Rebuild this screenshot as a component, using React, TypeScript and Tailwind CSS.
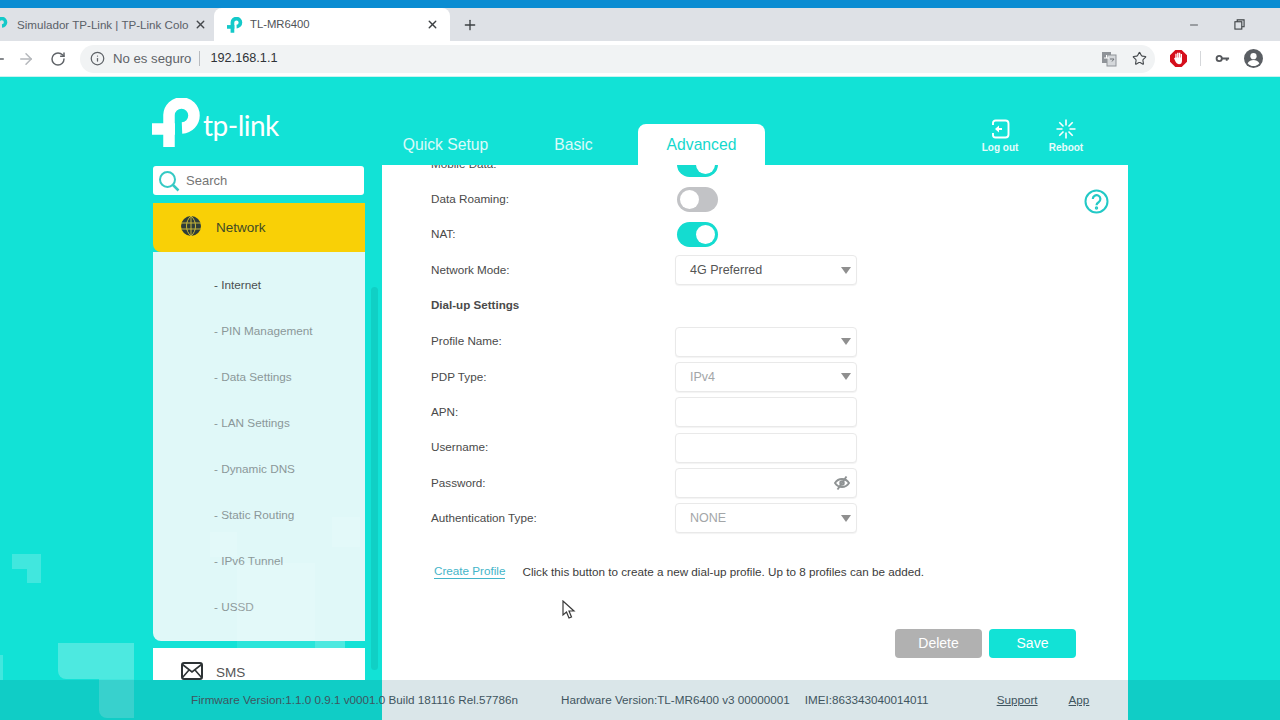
import { ArrowLeft, ArrowRight, Info, Minus, Plus, RotateCw, Star, X } from "lucide-react";

const subItems = ["- Internet", "- PIN Management", "- Data Settings", "- LAN Settings", "- Dynamic DNS", "- Static Routing", "- IPv6 Tunnel", "- USSD"];

function TpMark({ className, color }: { className: string; color: string }) {
  return (
    <svg viewBox="0 0 50 50" className={className} fill="none">
      <path d="M17 49V17A12.500 12.500 0 1 1 30 30" stroke={color} strokeWidth="11.500" />
      <path d="M0 31H23" stroke={color} strokeWidth="11.500" />
    </svg>
  );
}

function Toggle({ on }: { on: boolean }) {
  return (
    <div className={`ml-[2px] w-[41px] h-[25px] rounded-full p-[3px] flex ${on ? "bg-[#14dcd0] justify-end" : "bg-[#c2c3c6] justify-start"}`}>
      <div className="w-[19px] h-[19px] rounded-full bg-white" />
    </div>
  );
}

function Box({ text, arrow, muted, children }: { text?: string; arrow?: boolean; muted?: boolean; children?: React.ReactNode }) {
  return (
    <div className="w-[182px] h-[30px] rounded border border-[#e9e9e9] shadow-[0_1px_1px_rgba(0,0,0,0.05)] bg-white flex items-center pl-[14px] pr-[5px]">
      <span className={`flex-1 mt-px text-[12.500px] ${muted ? "text-[#a3a6a8]" : "text-[#555555]"}`}>{text}</span>
      {arrow && <div className="w-0 h-0 border-l-[5.500px] border-r-[5.500px] border-t-[7px] border-l-transparent border-r-transparent border-t-[#8f8f8f]" />}
      {children}
    </div>
  );
}

function Row({ label, children, className }: { label: string; children?: React.ReactNode; className?: string }) {
  return (
    <div className={`flex items-center h-[35.300px] ${className ?? ""}`}>
      <span className="w-[244px] -mt-[1px] text-[11.700px] text-[#4a4a4a]">{label}</span>
      {children}
    </div>
  );
}

export default function App() {
  return (
    <div className="w-[1280px] h-[720px] overflow-hidden relative flex flex-col bg-[#12e2d6] font-['Liberation_Sans',Arial,sans-serif]">
      <div className="h-2 bg-[#0a8cd2] shrink-0" />

      {/* tab strip */}
      <div className="h-[33px] bg-[#dee1e6] flex shrink-0 relative">
        <div className="w-[214px] flex items-center relative pl-[17px]">
          <TpMark className="absolute left-[-7px] top-[9px] w-[15px] h-[15px]" color="#14c9c9" />
          <span className="w-[173px] text-[11.600px] text-[#5a6068] whitespace-nowrap overflow-hidden">Simulador TP-Link | TP-Link Colo</span>
          <X size={13} strokeWidth={2.5} className="text-[#45484c] ml-[4px]" />
        </div>
        <div className="w-[236px] bg-white rounded-t-lg flex items-center pl-[13px]">
          <TpMark className="w-[16px] h-[16px]" color="#14c9c9" />
          <span className="ml-[7px] w-[176px] text-[11.300px] text-[#4f5358]">TL-MR6400</span>
          <X size={13} strokeWidth={2.5} className="text-[#3c4043]" />
        </div>
        <Plus size={16} strokeWidth={2} className="text-[#3c4043] ml-[12px] self-center" />
        <div className="flex-1" />
        <Minus size={12} className="text-[#55585c] self-center mr-[34px]" />
        <svg viewBox="0 0 12 12" className="w-[11px] h-[11px] self-center mr-[33px]" fill="none" stroke="#3c4043" strokeWidth="1.200">
          <rect x="1" y="3" width="7.500" height="8" />
          <path d="M3.500 3V1H11V8.500H8.500" />
        </svg>
        <X size={12} className="text-[#3c4043] self-center mr-[-10px]" />
      </div>

      {/* address bar */}
      <div className="h-[35px] bg-white flex items-center shrink-0">
        <ArrowLeft size={18} className="text-[#5f6368] ml-[-11px]" />
        <ArrowRight size={18} className="text-[#b5b8bc] ml-[10px]" />
        <RotateCw size={16} strokeWidth={2.2} className="text-[#5f6368] ml-[15px]" />
        <div className="ml-[14px] w-[1075px] h-[28px] rounded-full bg-[#f1f3f4] flex items-center pl-[10px] pr-[8px]">
          <Info size={15} className="text-[#5f6368]" />
          <span className="ml-[8px] text-[13.200px] text-[#5f6368]">No es seguro</span>
          <div className="w-px h-[15px] bg-[#b9bcc0] ml-[8px]" />
          <span className="ml-[10px] mt-px text-[12.700px] text-[#2f3237]">192.168.1.1</span>
          <div className="flex-1" />
          <svg viewBox="0 0 16 16" className="w-[16px] h-[16px]">
            <rect x="1" y="1" width="9" height="11" fill="#8f9398" />
            <rect x="6" y="4" width="9" height="11" fill="#d5d8db" stroke="#8f9398" />
            <path d="M3 7h5M5.500 4v3" stroke="#fff" strokeWidth="1" />
            <path d="M9 8h4M11 10.500l2-2.500" stroke="#6d7176" strokeWidth="1" fill="none" />
          </svg>
          <Star size={15} strokeWidth={1.8} className="text-[#45494d] ml-[15px]" />
        </div>
        <svg viewBox="0 0 16 16" className="w-[17px] h-[17px] ml-[15px]">
          <path d="M5 0h6l5 5v6l-5 5H5l-5-5V5z" fill="#d50f1c" />
          <path d="M5 7V3.500h1.200V7h.5V2.500h1.300V7h.4V2.500h1.300V7h.4V3.800h1.200V10c0 2.200-1 3.300-2.900 3.300S5.500 12 4.500 9.500L3.800 7.800z" fill="#fff" />
        </svg>
        <div className="w-px h-[15px] bg-[#d5d7da] ml-[13px]" />
        <svg viewBox="0 0 16 16" className="w-[15px] h-[15px] ml-[14px]" fill="none" stroke="#55585c" strokeWidth="2">
          <circle cx="4.500" cy="8" r="2.800" />
          <path d="M7.500 8H15M12.500 8v2.500" />
        </svg>
        <svg viewBox="0 0 20 20" className="w-[19px] h-[19px] ml-[14px]">
          <circle cx="10" cy="10" r="10" fill="#5a5e63" />
          <circle cx="10" cy="7.500" r="3.300" fill="#fff" />
          <path d="M3.800 15c1.500-2.600 3.800-3.400 6.200-3.400s4.700.8 6.200 3.400c-1.500 1.900-3.700 3-6.200 3s-4.700-1.100-6.200-3z" fill="#fff" />
        </svg>
      </div>
      <div className="h-px bg-[#c9f3f0] shrink-0" />

      {/* router page */}
      <div className="flex-1 relative min-h-0 bg-[#12e2d6]">
        <div className="h-[88px] flex">
          <div className="w-[230px] ml-[152px] pt-[21px] flex items-start">
            <TpMark className="w-[50px] h-[50px] shrink-0" color="#ffffff" />
            <span className="ml-[1px] mt-[8px] text-[28px] leading-[38px] text-white font-['Lato',sans-serif] tracking-[-0.5px]">tp-link</span>
          </div>
          <div className="flex items-end h-full text-[15.700px] text-white/85">
            <span className="w-[127px] h-[41px] flex items-center justify-center">Quick Setup</span>
            <span className="w-[129px] h-[41px] flex items-center justify-center">Basic</span>
            <span className="w-[127px] h-[41px] bg-white rounded-t-lg text-[#14d8cd] flex items-center justify-center">Advanced</span>
          </div>
          <div className="flex pt-[42px] ml-[210px] text-[10px] font-bold text-white/90">
            <div className="w-[50px] flex flex-col items-center">
              <svg viewBox="0 0 20 20" className="w-[20px] h-[20px]" fill="none" stroke="#fff" strokeWidth="1.900">
                <path d="M3 6V4a2.500 2.500 0 0 1 2.500-2.500h10A3 3 0 0 1 18.500 4.500v11a3 3 0 0 1-3 3h-10A2.500 2.500 0 0 1 3 16v-2" />
                <path d="M12 10H9" strokeWidth="2" />
                <path d="M9 6.500L5 10l4 3.500z" fill="#fff" stroke="none" />
              </svg>
              <span className="mt-px">Log out</span>
            </div>
            <div className="w-[50px] ml-[16px] flex flex-col items-center">
              <svg viewBox="0 0 20 20" className="w-[20px] h-[20px]" fill="none" stroke="#fff" strokeWidth="1.600">
                <path d="M10 0.500v6M10 13.500v6M0.500 10h6M13.500 10h6M3.300 3.300l4.200 4.200M12.500 12.500l4.200 4.200M3.300 16.700l4.200-4.200M12.500 7.500l4.200-4.200" />
              </svg>
              <span className="mt-px">Reboot</span>
            </div>
          </div>
        </div>

        <div className="flex h-[555px] pl-[153px]">
          {/* sidebar */}
          <div className="w-[212px] h-[515px] overflow-hidden shrink-0">
            <div className="mt-px w-[211px] h-[29px] rounded-[3px] bg-white flex items-center pl-[5px]">
              <svg viewBox="0 0 22 22" className="w-[22px] h-[22px]" fill="none" stroke="#35c9c4" strokeWidth="2">
                <circle cx="9.500" cy="9.500" r="7.500" />
                <path d="M15 15l5.500 5.500" strokeWidth="2.500" />
              </svg>
              <span className="ml-[6px] text-[13px] text-[#757575]">Search</span>
            </div>
            <div className="mt-[8px] h-[49px] bg-[#f9d006] rounded-bl-lg flex items-center pl-[28px]">
              <svg viewBox="0 0 20 20" className="w-[20px] h-[20px] mb-[3px]" fill="none">
                <circle cx="10" cy="10" r="10" fill="#2f3d38" />
                <path d="M0 7h20M0 13h20M10 0v20M10 0c-6 5-6 15 0 20M10 0c6 5 6 15 0 20" stroke="#c8b73a" strokeWidth="1" />
              </svg>
              <span className="ml-[15px] mt-px text-[13.500px] text-[#3f4a26]">Network</span>
            </div>
            <div className="h-[389px] bg-[#e0f8f8] rounded-bl-lg pt-[10px]">
              {subItems.map((item, i) => (
                <div key={item} className={`h-[46px] flex items-center pl-[61px] text-[11.750px] ${i === 0 ? "text-[#4a4f50]" : "text-[#8b9799]"}`}>
                  {item}
                </div>
              ))}
            </div>
            <div className="mt-[7px] h-[49px] bg-white flex items-center pl-[28px]">
              <svg viewBox="0 0 22 18" className="w-[22px] h-[18px] mb-[3px]" fill="none" stroke="#2d3335" strokeWidth="2">
                <rect x="1" y="1" width="20" height="16" rx="2" />
                <path d="M1.500 2.500L11 10l9.500-7.500M1.500 15.500L8 8M20.500 15.500L14 8" strokeWidth="1.600" />
              </svg>
              <span className="ml-[13px] mt-[2px] text-[13.500px] text-[#555555]">SMS</span>
            </div>
          </div>
          <div className="w-[17px] shrink-0 pl-[6px] pt-[122px]">
            <div className="w-[7px] h-[383px] bg-[#10d0c5] rounded-sm" />
          </div>

          {/* main panel */}
          <div className="w-[746px] h-full bg-white relative overflow-hidden pl-[49px]">
            <div className="absolute left-[702px] top-[24px]">
              <svg viewBox="0 0 25 25" className="w-[25px] h-[25px]" fill="none" stroke="#22c9c6" strokeWidth="2">
                <circle cx="12.500" cy="12.500" r="11" />
                <path d="M8.800 10a3.800 3.800 0 1 1 5.800 3.200c-1.400.9-2.100 1.500-2.100 3" strokeWidth="2.200" />
                <circle cx="12.500" cy="19" r="0.700" />
              </svg>
            </div>
            <div className="-mt-[18.500px]">
              <Row label="Mobile Data:"><Toggle on /></Row>
              <Row label="Data Roaming:"><Toggle on={false} /></Row>
              <Row label="NAT:"><Toggle on /></Row>
              <Row label="Network Mode:"><Box text="4G Preferred" arrow /></Row>
              <div className="h-[35.300px] flex items-center -mt-[0.500px] text-[11.600px] font-bold text-[#4a4a4a]">Dial-up Settings</div>
              <Row label="Profile Name:" className="mt-[1.500px]"><Box arrow /></Row>
              <Row label="PDP Type:"><Box text="IPv4" arrow muted /></Row>
              <Row label="APN:"><Box /></Row>
              <Row label="Username:"><Box /></Row>
              <Row label="Password:">
                <Box>
                  <svg viewBox="0 0 16 16" className="w-[16px] h-[16px] mr-[1px]" fill="none" stroke="#8f9394" strokeWidth="1.900">
                    <path d="M1 8c1.800-2.800 4.200-4 7-4s5.200 1.200 7 4c-1.800 2.800-4.200 4-7 4S2.800 10.800 1 8z" />
                    <circle cx="8" cy="8" r="1.800" />
                    <path d="M12.500 1.500L3.500 14.500" />
                  </svg>
                </Box>
              </Row>
              <Row label="Authentication Type:"><Box text="NONE" arrow muted /></Row>
            </div>
            <div className="mt-[26px] ml-[3px] flex items-center h-[20px]">
              <span className="text-[11.700px] leading-[14px] text-[#43b5c9] border-b border-[#43b5c9]">Create Profile</span>
              <span className="ml-[17px] mt-[1px] text-[11.700px] text-[#3c3c3c]">Click this button to create a new dial-up profile. Up to 8 profiles can be added.</span>
            </div>
            <div className="flex justify-end gap-[7px] mt-[47px] pr-[52px]">
              <div className="w-[87px] h-[29px] rounded bg-[#b1b1b1] text-white text-[14px] flex items-center justify-center">Delete</div>
              <div className="w-[87px] h-[29px] rounded bg-[#12e2d6] text-white text-[14px] flex items-center justify-center">Save</div>
            </div>
          </div>
        </div>

        {/* faint background squares that sit over the page */}
        <div className="absolute left-[12px] top-[477px] w-[29px] h-[15px] bg-white/20" />
        <div className="absolute left-[27px] top-[492px] w-[14px] h-[14px] bg-white/20" />
        <div className="absolute left-[58px] top-[566px] w-[76px] h-[36px] rounded-bl-lg bg-white/25" />
        <div className="absolute left-[99px] top-[602px] w-[35px] h-[39px] rounded-bl-lg bg-white/20" />
        <div className="absolute left-0 top-[578px] w-[3px] h-[25px] bg-white/20" />
        <div className="absolute left-[210px] top-[455px] w-[27px] h-[25px] bg-white/10" />
        <div className="absolute left-[237px] top-[486px] w-[78px] h-[92px] bg-white/10" />
        <div className="absolute left-[332px] top-[440px] w-[28px] h-[30px] bg-white/10" />
        <div className="absolute left-[254px] top-[578px] w-[25px] h-[25px] bg-white/20" />
        <div className="absolute left-[315px] top-[564px] w-[30px] h-[7px] bg-white/25" />

        {/* mouse pointer */}
        <svg viewBox="0 0 14 20" className="absolute left-[562px] top-[523px] w-[14px] h-[20px]" fill="#fff" stroke="#3a3a3a" strokeWidth="1.200">
          <path d="M1 1V15L4.500 12L7 18L9.500 17L7 11H12z" />
        </svg>

        {/* footer band */}
        <div className="absolute left-0 right-0 bottom-0 h-[40px] bg-[rgba(5,86,106,0.15)] flex items-center pl-[191px] text-[11.700px] text-[#3f5560]">
          <span>Firmware Version:1.1.0 0.9.1 v0001.0 Build 181116 Rel.57786n</span>
          <span className="ml-[43px]">Hardware Version:TL-MR6400 v3 00000001</span>
          <span className="ml-[15px]">IMEI:863343040014011</span>
          <span className="ml-[68px] underline">Support</span>
          <span className="ml-[31px] underline">App</span>
        </div>
      </div>
    </div>
  );
}
